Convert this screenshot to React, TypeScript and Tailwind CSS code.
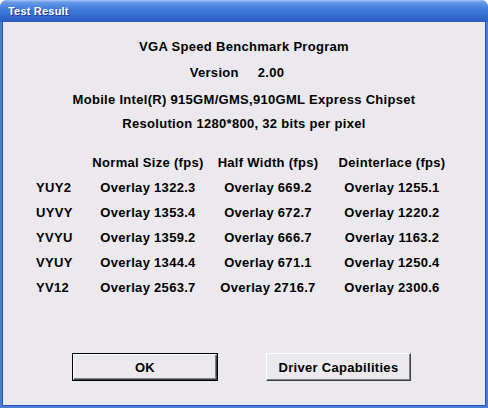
import React from "react";

const rows: [string, string, string, string][] = [
  ["YUY2", "Overlay 1322.3", "Overlay 669.2", "Overlay 1255.1"],
  ["UYVY", "Overlay 1353.4", "Overlay 672.7", "Overlay 1220.2"],
  ["YVYU", "Overlay 1359.2", "Overlay 666.7", "Overlay 1163.2"],
  ["VYUY", "Overlay 1344.4", "Overlay 671.1", "Overlay 1250.4"],
  ["YV12", "Overlay 2563.7", "Overlay 2716.7", "Overlay 2300.6"],
];

export default function App() {
  return (
    <div className="w-[488px] h-[408px] bg-white">
      <div className="w-[488px] h-[408px] flex flex-col rounded-t-[7px] overflow-hidden bg-[#4a7ed9]">
        <div className="h-[22px] shrink-0 flex items-center pl-[8px] bg-[linear-gradient(to_bottom,#a8c8f6_0px,#6a9de8_2px,#4f88e0_6px,#3f78da_11px,#3468cc_17px,#2c5cc0_22px)]">
          <span className="text-white font-bold text-[11px] leading-none tracking-[0.2px] [font-family:'Liberation_Sans',Arial,sans-serif] [text-shadow:1px_1px_0_#1c3f94]">
            Test Result
          </span>
        </div>
        <div className="flex-1 flex px-[2px] pb-[2px]">
          <div className="flex-1 border border-t-0 border-[#2652b4] bg-[#ebe9ed] text-black font-bold text-[13px] leading-[25px] tracking-[0.3px] [font-family:'Liberation_Sans',Arial,sans-serif]">
            <div className="pt-[12px] flex flex-col">
              <div className="h-[26px] text-center">VGA Speed Benchmark Program</div>
              <div className="h-[27px] flex justify-center">
                <div className="flex gap-[19px] mr-[14px]">
                  <span>Version</span>
                  <span>2.00</span>
                </div>
              </div>
              <div className="h-[24px] text-center">Mobile Intel(R) 915GM/GMS,910GML Express Chipset</div>
              <div className="h-[25px] text-center">Resolution 1280*800, 32 bits per pixel</div>
            </div>
            <div className="mt-[14px] ml-[33px] grid grid-cols-[52px_120px_120px_128px]">
              <div className="h-[25px]"></div>
              <div className="h-[25px] text-center">Normal Size (fps)</div>
              <div className="h-[25px] text-center">Half Width (fps)</div>
              <div className="h-[25px] text-center">Deinterlace (fps)</div>
              {rows.map((r) => (
                <React.Fragment key={r[0]}>
                  <div className="h-[25px]">{r[0]}</div>
                  <div className="h-[25px] text-center">{r[1]}</div>
                  <div className="h-[25px] text-center">{r[2]}</div>
                  <div className="h-[25px] text-center">{r[3]}</div>
                </React.Fragment>
              ))}
            </div>
            <div className="mt-[53px] ml-[69px] flex gap-[48px]">
              <div className="w-[146px] h-[28px] border border-black flex">
                <div className="flex-1 flex items-center justify-center border border-t-white border-l-white border-r-[#404040] border-b-[#404040] shadow-[inset_-1px_-1px_0_#808080] leading-none">
                  OK
                </div>
              </div>
              <div className="w-[145px] h-[28px] flex items-center justify-center border border-t-white border-l-white border-r-[#404040] border-b-[#404040] shadow-[inset_-1px_-1px_0_#808080] leading-none">
                Driver Capabilities
              </div>
            </div>
          </div>
        </div>
      </div>
    </div>
  );
}
